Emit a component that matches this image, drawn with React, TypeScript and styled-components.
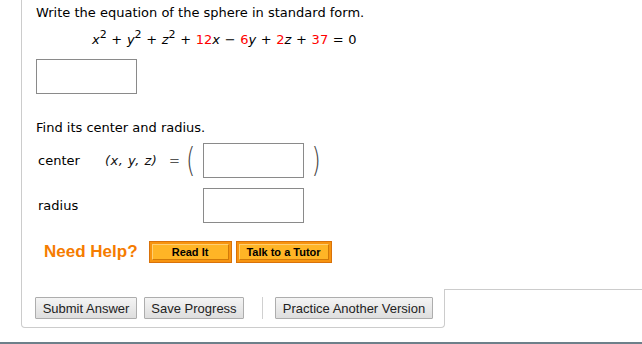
import React from "react";
import styled, { createGlobalStyle } from "styled-components";

const Global = createGlobalStyle`
  html, body { margin: 0; padding: 0; background: #fff; }
  body { font-family: Verdana, "DejaVu Sans", sans-serif; color: #000; }
`;

const Page = styled.div`
  width: 642px;
  height: 344px;
  display: flex;
  flex-direction: column;
  overflow: hidden;
`;

const Wrap = styled.div`
  padding-left: 21px;
  display: flex;
  flex-direction: column;
`;

const Panel = styled.div`
  border-left: 1px solid #cccccc;
  padding: 5px 0 26px 14px;
  display: flex;
  flex-direction: column;
`;

const Text = styled.div<{ $mt?: number }>`
  font-size: 13px;
  line-height: 16px;
  margin-top: ${(p) => p.$mt ?? 0}px;
`;

const Equation = styled.div`
  font-size: 13px;
  line-height: 16px;
  margin: 11px 0 0 56px;
  word-spacing: 0.5px;
`;

const Red = styled.span`
  color: #ff0000;
`;

const Sup = styled.sup`
  font-size: 11px;
  line-height: 0;
  vertical-align: 6px;
`;

const Box = styled.div`
  width: 99px;
  height: 33px;
  border: 1px solid #8a8a8a;
  background: #fff;
`;

const FirstBox = styled(Box)`
  margin-top: 11px;
`;

const Row = styled.div<{ $mt: number }>`
  display: flex;
  align-items: center;
  margin-top: ${(p) => p.$mt}px;
  height: 35px;
`;

const Label = styled.div`
  font-size: 13px;
  width: 67px;
  padding-left: 2px;
`;

const Vars = styled.div`
  font-size: 13px;
  font-style: italic;
  letter-spacing: 0.5px;
  width: 64px;
  color: #111;
`;

const Eq = styled.div`
  font-size: 13px;
  color: #555;
  width: 14px;
`;

const Paren = styled.div<{ $w: number }>`
  font-family: "DejaVu Sans", sans-serif;
  font-weight: 200;
  font-size: 34px;
  line-height: 35px;
  color: #444;
  width: ${(p) => p.$w}px;
  transform: scaleX(0.7);
`;

const Spacer = styled.div<{ $w: number }>`
  width: ${(p) => p.$w}px;
`;

const Help = styled.div`
  display: flex;
  align-items: center;
  margin-top: 18px;
  padding-left: 8px;
  height: 22px;
`;

const HelpTitle = styled.div`
  font-family: "Liberation Sans", Arial, sans-serif;
  font-weight: bold;
  font-size: 17px;
  color: #f57c00;
  margin-right: 11px;
`;

const OrangeBtn = styled.button<{ $w: number }>`
  width: ${(p) => p.$w}px;
  height: 22px;
  margin-right: 4px;
  border: 1px solid #d9720a;
  background: #f7940f;
  padding: 2px;
  box-sizing: border-box;
  display: flex;
  cursor: pointer;
`;

const OrangeInner = styled.span`
  flex: 1;
  border: 1px solid #ffcf73;
  border-right-color: #d27a08;
  border-bottom-color: #d27a08;
  background: #ffb526;
  font-family: "Liberation Sans", Arial, sans-serif;
  font-weight: bold;
  font-size: 11px;
  line-height: 14px;
  color: #000;
  display: flex;
  align-items: center;
  justify-content: center;
`;

const Footer = styled.div`
  display: flex;
`;

const FooterLeft = styled.div`
  width: 409px;
  height: 30px;
  border-left: 1px solid #cccccc;
  border-bottom: 1px solid #cccccc;
  border-right: 1px solid #cccccc;
  border-radius: 0 0 4px 4px;
  padding: 8px 0 0 13px;
  display: flex;
  align-items: flex-start;
`;

const FooterRight = styled.div`
  flex: 1;
  border-top: 1px solid #cccccc;
`;

const GreyBtn = styled.button<{ $w: number; $mr: number }>`
  width: ${(p) => p.$w}px;
  height: 22px;
  margin-right: ${(p) => p.$mr}px;
  border: 1px solid #adadad;
  border-radius: 1px;
  background: linear-gradient(#f4f4f4, #dedede);
  font-family: "Liberation Sans", Arial, sans-serif;
  font-size: 13px;
  color: #222;
  padding: 0;
  cursor: pointer;
`;

const Divider = styled.div`
  width: 1px;
  height: 22px;
  background: #d0d0d0;
  margin-right: 12px;
`;

const BottomLine = styled.div`
  margin-top: auto;
  height: 2px;
  background: #6d808a;
`;

export default function App() {
  return (
    <Page>
      <Global />
      <Wrap>
        <Panel>
          <Text>Write the equation of the sphere in standard form.</Text>
          <Equation>
            <i>x</i><Sup>2</Sup> + <i>y</i><Sup>2</Sup> + <i>z</i><Sup>2</Sup> + <Red>12</Red><i>x</i> − <Red>6</Red><i>y</i> + <Red>2</Red><i>z</i> + <Red>37</Red> = 0
          </Equation>
          <FirstBox />
          <Text $mt={26}>Find its center and radius.</Text>
          <Row $mt={7}>
            <Label>center</Label>
            <Vars>(x, y, z)</Vars>
            <Eq>=</Eq>
            <Paren $w={20}>(</Paren>
            <Box />
            <Spacer $w={6} />
            <Paren $w={10}>)</Paren>
          </Row>
          <Row $mt={10}>
            <Label>radius</Label>
            <Spacer $w={98} />
            <Box />
          </Row>
          <Help>
            <HelpTitle>Need Help?</HelpTitle>
            <OrangeBtn $w={83}>
              <OrangeInner>Read It</OrangeInner>
            </OrangeBtn>
            <OrangeBtn $w={96}>
              <OrangeInner>Talk to a Tutor</OrangeInner>
            </OrangeBtn>
          </Help>
        </Panel>
        <Footer>
          <FooterLeft>
            <GreyBtn $w={102} $mr={7}>Submit Answer</GreyBtn>
            <GreyBtn $w={100} $mr={18}>Save Progress</GreyBtn>
            <Divider />
            <GreyBtn $w={158} $mr={0}>Practice Another Version</GreyBtn>
          </FooterLeft>
          <FooterRight />
        </Footer>
      </Wrap>
      <BottomLine />
    </Page>
  );
}
